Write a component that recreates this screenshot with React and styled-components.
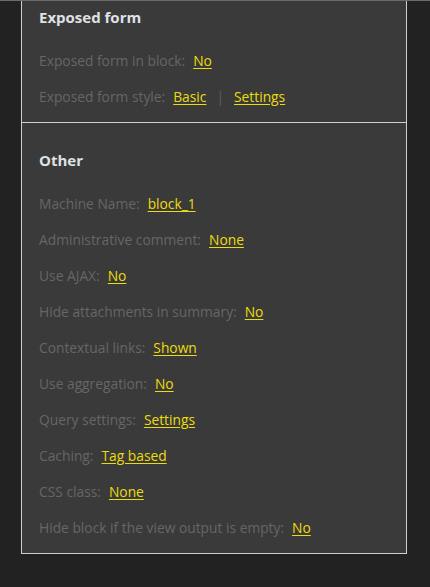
import React from 'react';
import styled, { createGlobalStyle } from 'styled-components';

const GlobalStyle = createGlobalStyle`
  html, body {
    margin: 0;
    padding: 0;
    background: #222222;
  }
`;

const Page = styled.div`
  min-height: 587px;
  background: #222222;
  border-top: 1px solid #6b6b6b;
  box-sizing: border-box;
  padding: 0 23px 0 21px;
  font-family: "Open Sans", "Noto Sans", sans-serif;
`;

const Panel = styled.div`
  width: 386px;
  box-sizing: border-box;
  background: #3a3a3a;
  border: 1px solid #cfcfcf;
  border-top: none;
`;

const Section = styled.section`
  padding: ${props => props.first ? '5px 17px 8px' : '26px 17px 8px'};
  border-bottom: ${props => props.last ? 'none' : '1px solid #cfcfcf'};
`;

const Heading = styled.h3`
  margin: 0 0 14px;
  font-size: 15px;
  font-weight: 700;
  color: #dfe1e5;
  line-height: 22px;
`;

const Row = styled.div`
  display: flex;
  align-items: center;
  height: 36px;
  font-size: 13.8px;
  color: #666666;
`;

const Label = styled.span`
  margin-right: 8px;
`;

const Link = styled.a`
  color: #ecdc0c;
  text-decoration: underline;
  text-underline-offset: 2px;
  cursor: pointer;
`;

const Pipe = styled.span`
  margin: 0 10px;
  color: #5e5e5e;
`;

const exposed = [
  { label: 'Exposed form in block:', links: ['No'] },
  { label: 'Exposed form style:', links: ['Basic', 'Settings'] },
];

const other = [
  { label: 'Machine Name:', links: ['block_1'] },
  { label: 'Administrative comment:', links: ['None'] },
  { label: 'Use AJAX:', links: ['No'] },
  { label: 'Hide attachments in summary:', links: ['No'] },
  { label: 'Contextual links:', links: ['Shown'] },
  { label: 'Use aggregation:', links: ['No'] },
  { label: 'Query settings:', links: ['Settings'] },
  { label: 'Caching:', links: ['Tag based'] },
  { label: 'CSS class:', links: ['None'] },
  { label: 'Hide block if the view output is empty:', links: ['No'] },
];

function Setting({ label, links }) {
  return (
    <Row>
      <Label>{label}</Label>
      {links.map((text, i) => (
        <React.Fragment key={text}>
          {i > 0 && <Pipe>|</Pipe>}
          <Link>{text}</Link>
        </React.Fragment>
      ))}
    </Row>
  );
}

export default function App() {
  return (
    <Page>
      <GlobalStyle />
      <Panel>
        <Section first>
          <Heading>Exposed form</Heading>
          {exposed.map(s => <Setting key={s.label} {...s} />)}
        </Section>
        <Section last>
          <Heading>Other</Heading>
          {other.map(s => <Setting key={s.label} {...s} />)}
        </Section>
      </Panel>
    </Page>
  );
}
